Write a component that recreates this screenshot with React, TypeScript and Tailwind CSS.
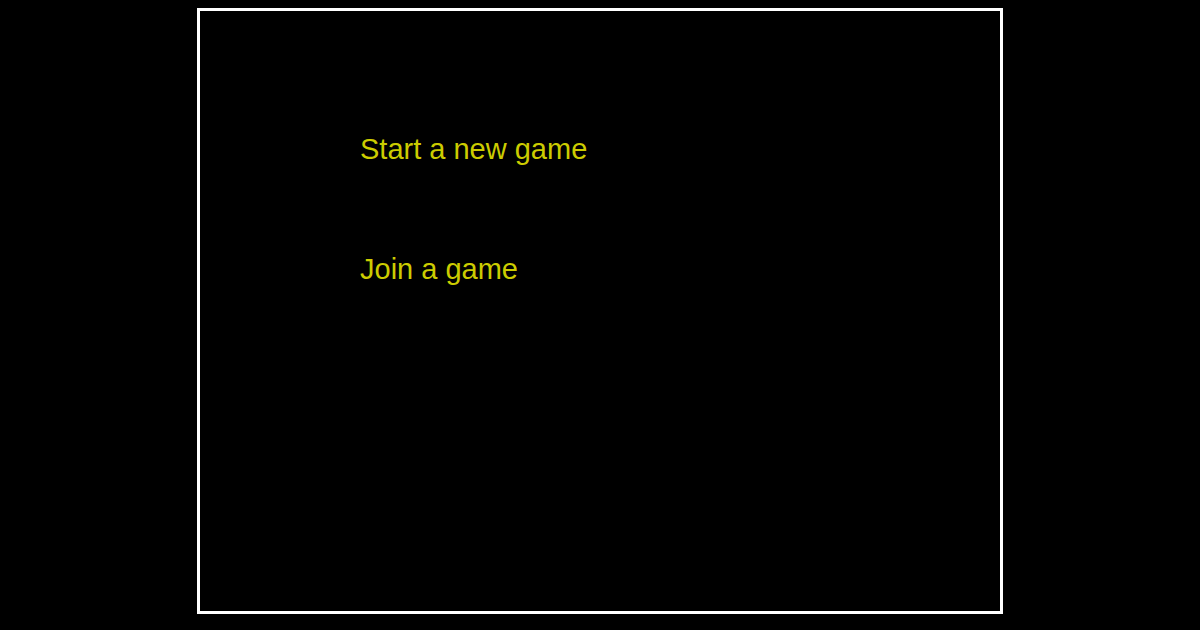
export default function App() {
  return (
    <div className="flex h-[630px] w-[1200px] justify-center bg-black pt-2" style={{ fontFamily: '"Liberation Sans", Arial, sans-serif' }}>
      <div className="flex h-[606px] w-[806px] flex-col gap-[88px] border-[3px] border-white pl-[160px] pt-[122px] text-[29px] leading-[32px] text-[#cccc00]">
        <button className="w-fit text-left">Start a new game</button>
        <button className="w-fit text-left">Join a game</button>
      </div>
    </div>
  );
}
